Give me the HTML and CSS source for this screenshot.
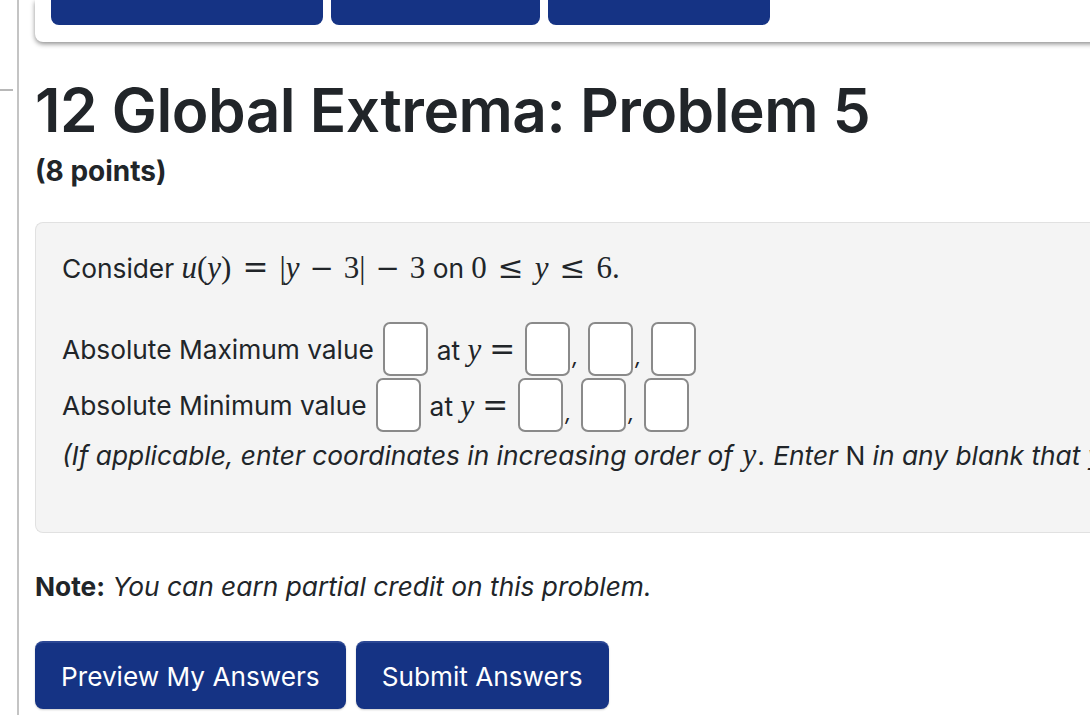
FILE: index.html
```html
<!DOCTYPE html>
<html lang="en">
<head>
    <meta charset="UTF-8">
    <title>12 Global Extrema: Problem 5</title>
    <link rel="stylesheet" href="styles.css">
</head>
<body>
    <div class="page">
        <div class="rail"><span class="tick"></span></div>

        <div class="main">
            <div class="nav-card">
                <div class="nav-btn">Previous Problem</div>
                <div class="nav-btn list">Problem List</div>
                <div class="nav-btn next">Next Problem</div>
            </div>

            <h1>12 Global Extrema: Problem 5</h1>
            <div class="points">(8 points)</div>

            <div class="problem">
                <div class="line">
                    Consider&nbsp;<span class="math"><i>u</i>(<i>y</i>)<span class="rel">=</span>|<i>y</i><span class="op">&minus;</span>3|<span class="op">&minus;</span>3</span>&nbsp;on&nbsp;<span class="math">0<span class="rel">&le;</span><i>y</i><span class="rel">&le;</span>6.</span>
                </div>

                <div class="answer-row first">
                    <span>Absolute Maximum value</span>
                    <span class="blank value"></span>
                    <span>at&nbsp;<span class="math"><i>y</i><span class="rel">=</span></span></span>
                    <span class="blank"></span><span class="comma">,</span>
                    <span class="blank"></span><span class="comma">,</span>
                    <span class="blank"></span>
                </div>
                <div class="answer-row">
                    <span>Absolute Minimum value</span>
                    <span class="blank value"></span>
                    <span>at&nbsp;<span class="math"><i>y</i><span class="rel">=</span></span></span>
                    <span class="blank"></span><span class="comma">,</span>
                    <span class="blank"></span><span class="comma">,</span>
                    <span class="blank"></span>
                </div>
                <div class="hint">(If applicable, enter coordinates in increasing order of <span class="math"><i>y</i></span>. Enter <span class="upright">N</span> in any blank that you don't need.)</div>
            </div>

            <p class="note"><b>Note:</b> <i>You can earn partial credit on this problem.</i></p>

            <div class="actions">
                <button class="btn">Preview My Answers</button>
                <button class="btn">Submit Answers</button>
            </div>
        </div>
    </div>
</body>
</html>
```

FILE: styles.css
```css
body {
    margin: 0;
    font-family: Inter, "Noto Sans", sans-serif;
    color: #212529;
    background: #fff;
    overflow: hidden;
}

.page {
    display: flex;
    height: 715px;
}

.rail {
    width: 17px;
    flex-shrink: 0;
    border-right: 2px solid #c4c4c4;
    position: relative;
}

.rail .tick {
    position: absolute;
    left: 0;
    top: 89px;
    width: 13px;
    height: 2px;
    background: #b8b8b8;
}

.main {
    padding-left: 16px;
    flex: 1;
    min-width: 0;
    overflow: hidden;
    white-space: nowrap;
}

.nav-card {
    display: flex;
    gap: 8px;
    height: 25px;
    padding: 0 0 17px 16px;
    margin-right: -20px;
    background: #fff;
    border-radius: 0 0 0 8px;
    box-shadow: 0 2px 5px rgba(0, 0, 0, 0.45);
    overflow: hidden;
}

.nav-btn {
    width: 272px;
    height: 25px;
    background: #153384;
    color: transparent;
    border-radius: 0 0 8px 8px;
}

.nav-btn.list {
    width: 209px;
}

.nav-btn.next {
    width: 222px;
}

h1 {
    font-size: 60.3px;
    font-weight: 600;
    letter-spacing: -0.5px;
    margin: 32px 0 0 0;
    line-height: 74px;
}

.points {
    font-size: 28px;
    font-weight: 700;
    margin-top: 8px;
    line-height: 30px;
}

.problem {
    box-sizing: border-box;
    margin-top: 36px;
    height: 311px;
    background: #f4f4f4;
    border: 1px solid #e1e1e1;
    border-right: none;
    border-radius: 8px 0 0 8px;
    padding: 29px 0 0 26px;
    font-size: 26.3px;
    overflow: hidden;
}

.line {
    line-height: 30px;
}

.math {
    font-family: "Liberation Serif", "DejaVu Serif", serif;
    font-size: 31px;
}

.math .rel {
    font-family: "DejaVu Serif", serif;
    margin: 0 11px;
}

.math .op {
    font-family: "DejaVu Serif", serif;
    font-size: 29px;
    margin: 0 10px;
}

.answer-row {
    display: flex;
    align-items: center;
    height: 54px;
    margin-top: 2px;
}

.answer-row.first {
    margin-top: 38px;
}

.answer-row .math .rel {
    margin: 0 10px 0 8px;
}

.blank {
    display: inline-block;
    width: 41px;
    height: 50px;
    border: 2px solid #8a8a8a;
    border-radius: 7px;
    background: #fff;
}

.blank.value {
    margin: 0 9px;
}

.comma {
    align-self: flex-end;
    width: 18px;
    text-indent: 2px;
    margin-bottom: 9px;
    font-size: 22px;
    line-height: 22px;
    font-style: italic;
}

.hint {
    font-style: italic;
    line-height: 30px;
    margin-top: 8px;
}

.hint .math {
    margin: 0 2px;
}

.hint .upright {
    font-style: normal;
}

.note {
    font-size: 26.3px;
    margin: 39px 0 0 0;
    line-height: 30px;
}

.actions {
    display: flex;
    gap: 10px;
    margin-top: 39px;
}

.btn {
    font-family: Inter, "Noto Sans", sans-serif;
    font-size: 26.2px;
    color: #fff;
    background: #153384;
    border: none;
    border-top: 2px solid #2b4794;
    border-radius: 8px;
    height: 68px;
    padding: 0 26px;
    box-shadow: 0 1px 2px rgba(0, 0, 0, 0.2);
}
```
